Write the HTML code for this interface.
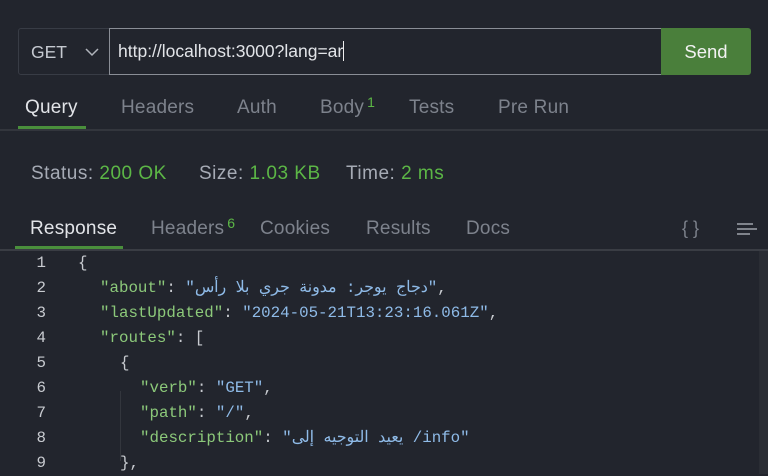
<!DOCTYPE html>
<html><head><meta charset="utf-8"><style>
*{margin:0;padding:0;box-sizing:border-box}
body{width:768px;height:474px;background:#22252d;overflow:hidden;position:relative;font-family:"Liberation Sans","Noto Sans CJK SC",sans-serif;color:#a6abb5}
.abs{position:absolute}
.method{left:18px;top:28px;width:92px;height:47px;border:1px solid #383c45;border-radius:3px 0 0 3px;background:#22252d}
.method span{position:absolute;left:12px;top:13px;font-size:17.5px;color:#c5c9d0}
.url{left:109px;top:28px;width:553px;height:47px;border:1.5px solid #8a8e96;background:#22252d}
.url span{position:absolute;left:8px;top:12px;font-size:17.5px;color:#e2e4e8}
.send{left:661px;top:28px;width:90px;height:47px;background:#4a7f3b;border-radius:0 3px 3px 0;color:#f2f2f2;font-size:18.5px;text-align:center;line-height:47px}
.tab{font-size:19px;color:#7d828c;letter-spacing:0.2px}
.sup{font-size:14px;color:#5cb746;position:relative;top:-6px;margin-left:3px}
.st{font-size:19px;letter-spacing:0.5px;color:#a6abb5}
.code{font-family:"Liberation Mono","Noto Sans CJK SC",monospace;font-size:15.8px;position:absolute;left:0;top:251px;width:760px}
.ln{position:absolute;left:0;width:46px;text-align:right;color:#6b6f78}
.line{position:absolute;height:25px;line-height:25px;white-space:pre;color:#c8cbd0}
.k{color:#8cc97a}.s{color:#8fbbe8}
</style></head><body>
<div class="abs method"><span>GET</span>
<svg class="abs" style="left:66px;top:18px" width="14" height="10" viewBox="0 0 14 10"><path d="M1 2 L7 8 L13 2" stroke="#b0b4bb" stroke-width="1.5" fill="none"/></svg></div>
<div class="abs url"><span>http://localhost:3000?lang=ar<span style="position:static;border-left:1.5px solid #eee;margin-left:0"></span></span></div>
<div class="abs send">Send</div>
<div class="abs tab" style="left:25px;top:97px;color:#e2e4e8">Query</div>
<div class="abs" style="left:18px;top:126px;width:68px;height:3px;background:#4a8f3c"></div>
<div class="abs tab" style="left:121px;top:97px">Headers</div>
<div class="abs tab" style="left:237px;top:97px">Auth</div>
<div class="abs tab" style="left:320px;top:97px">Body<span class="sup">1</span></div>
<div class="abs tab" style="left:409px;top:97px">Tests</div>
<div class="abs tab" style="left:498px;top:97px">Pre Run</div>
<div class="abs" style="left:0;top:129px;width:768px;height:2px;background:#33363d"></div>
<div class="abs st" style="left:31px;top:163px">Status: <span style="color:#5cb746">200 OK</span></div>
<div class="abs st" style="left:199px;top:163px">Size: <span style="color:#5cb746">1.03 KB</span></div>
<div class="abs st" style="left:346px;top:163px">Time: <span style="color:#5cb746">2 ms</span></div>
<div class="abs tab" style="left:30px;top:218px;color:#e2e4e8">Response</div>
<div class="abs" style="left:15px;top:246px;width:108px;height:3px;background:#4a8f3c"></div>
<div class="abs tab" style="left:151px;top:218px">Headers<span class="sup">6</span></div>
<div class="abs tab" style="left:260px;top:218px">Cookies</div>
<div class="abs tab" style="left:366px;top:218px">Results</div>
<div class="abs tab" style="left:466px;top:218px">Docs</div>
<div class="abs" style="left:682px;top:218px;font-size:18px;color:#7d828c">{ }</div>
<svg class="abs" style="left:736px;top:222px" width="22" height="14"><path d="M1 2H17M1 7H21M1 12H14" stroke="#a0a4ab" stroke-width="1.5"/></svg>
<div class="abs" style="left:0;top:249px;width:768px;height:2px;background:#3a3d44"></div>
<div class="abs" style="left:759px;top:251px;width:9px;height:223px;background:#2a2d34"></div>
<div class="code">
<div class="ln line" style="top:0">1</div><div class="line" style="top:0;left:78px">{</div>
<div class="ln line" style="top:25px">2</div><div class="line" style="top:25px;left:100px"><span class="k">"about"</span>: <span class="s">"دجاج يوجر: مدونة جري بلا رأس"</span>,</div>
<div class="ln line" style="top:50px">3</div><div class="line" style="top:50px;left:100px"><span class="k">"lastUpdated"</span>: <span class="s">"2024-05-21T13:23:16.061Z"</span>,</div>
<div class="ln line" style="top:75px">4</div><div class="line" style="top:75px;left:100px"><span class="k">"routes"</span>: [</div>
<div class="ln line" style="top:100px">5</div><div class="line" style="top:100px;left:120px">{</div>
<div class="abs" style="left:120px;top:140px;width:1px;height:70px;background:#33363d"></div>
<div class="ln line" style="top:125px">6</div><div class="line" style="top:125px;left:140px"><span class="k">"verb"</span>: <span class="s">"GET"</span>,</div>
<div class="ln line" style="top:150px">7</div><div class="line" style="top:150px;left:140px"><span class="k">"path"</span>: <span class="s">"/"</span>,</div>
<div class="ln line" style="top:175px">8</div><div class="line" style="top:175px;left:140px"><span class="k">"description"</span>: <span class="s">"يعيد التوجيه إلى /info"</span></div>
<div class="ln line" style="top:200px">9</div><div class="line" style="top:200px;left:120px">},</div>
</div>
</body></html>
